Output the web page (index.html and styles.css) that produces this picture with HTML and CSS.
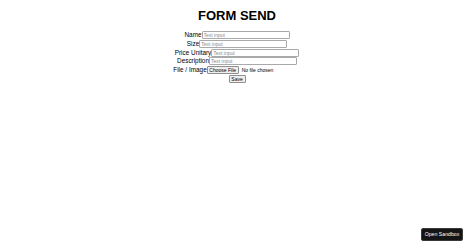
FILE: index.html
```html
<!DOCTYPE html>
<html>
<head>
<meta charset="utf-8">
<link rel="stylesheet" href="styles.css">
</head>
<body>
<main class="page">
  <h1 class="title">FORM SEND</h1>
  <form class="form">
    <div class="row"><label class="label">Name</label><input class="field" type="text" placeholder="Text input"></div>
    <div class="row"><label class="label">Size</label><input class="field" type="text" placeholder="Text input"></div>
    <div class="row"><label class="label">Price Unitary</label><input class="field" type="text" placeholder="Text input"></div>
    <div class="row"><label class="label">Description</label><input class="field" type="text" placeholder="Text input"></div>
    <div class="row"><label class="label">File / Image</label><span class="file"><span class="file-btn">Choose File</span><span class="file-name">No file chosen</span></span></div>
    <div class="row"><button class="save" type="button">Save</button></div>
  </form>
</main>
<button class="sandbox" type="button">Open Sandbox</button>
</body>
</html>
```
FILE: styles.css
```css
html, body {
  margin: 0;
  padding: 0;
  background: #ffffff;
  font-family: "Liberation Sans", Arial, sans-serif;
  color: #000;
}
.page {
  padding-top: 8px;
  text-align: center;
}
.title {
  margin: 0 0 8px 0;
  font-size: 13px;
  line-height: 15px;
  font-weight: bold;
}
.form {
  display: flex;
  flex-direction: column;
  align-items: center;
}
.row {
  height: 8.7px;
  display: flex;
  align-items: center;
  justify-content: center;
}
.label {
  font-size: 6.4px;
  line-height: 8px;
}
.field {
  box-sizing: border-box;
  width: 88px;
  height: 8px;
  margin: 0;
  padding: 0 1px;
  border: 1px solid #a9a9a9;
  border-radius: 1px;
  font-family: "Liberation Sans", Arial, sans-serif;
  font-size: 5px;
  outline: none;
}
.field::placeholder {
  color: #8a8a8a;
}
.file {
  display: flex;
  align-items: center;
  width: 94px;
}
.file-btn {
  box-sizing: border-box;
  height: 8px;
  width: 32px;
  border: 1px solid #8f8f8f;
  border-radius: 1px;
  background: #efefef;
  font-size: 5px;
  line-height: 6px;
  text-align: center;
}
.file-name {
  margin-left: 3px;
  font-size: 5px;
  line-height: 8px;
  text-align: left;
}
.save {
  box-sizing: border-box;
  height: 8px;
  width: 17px;
  margin: 0;
  padding: 0;
  border: 1px solid #8f8f8f;
  border-radius: 1px;
  background: #efefef;
  font-family: "Liberation Sans", Arial, sans-serif;
  font-size: 5px;
  line-height: 6px;
  color: #000;
}
.sandbox {
  position: fixed;
  right: 11px;
  bottom: 7px;
  box-sizing: border-box;
  width: 42px;
  height: 13px;
  padding: 0;
  border: 1px solid #3a3a3a;
  border-radius: 2px;
  background: #151515;
  color: #ffffff;
  font-family: "Liberation Sans", Arial, sans-serif;
  font-size: 5.2px;
  line-height: 11px;
}
```
